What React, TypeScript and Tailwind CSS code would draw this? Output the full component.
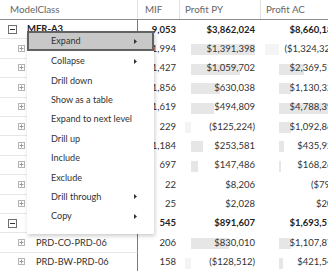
import React from 'react';

type Row = {
  label: string;
  level: 0 | 1;
  mif: string;
  py: number;
  ac: number;
};

const rows: Row[] = [
  { label: 'MFR-A3', level: 0, mif: '9,053', py: 3862024, ac: 8660184 },
  { label: 'PRD-AA-PRD-01', level: 1, mif: '1,994', py: 1391398, ac: -1324325 },
  { label: 'PRD-AB-PRD-02', level: 1, mif: '1,427', py: 1059702, ac: 2369513 },
  { label: 'PRD-AC-PRD-03', level: 1, mif: '1,856', py: 630038, ac: 1130329 },
  { label: 'PRD-AD-PRD-04', level: 1, mif: '1,619', py: 494809, ac: 4788397 },
  { label: 'PRD-AE-PRD-05', level: 1, mif: '229', py: -125224, ac: 1092860 },
  { label: 'PRD-AF-PRD-06', level: 1, mif: '1,184', py: 253581, ac: 435923 },
  { label: 'PRD-AG-PRD-07', level: 1, mif: '697', py: 147486, ac: 168263 },
  { label: 'PRD-AH-PRD-08', level: 1, mif: '22', py: 8206, ac: -796 },
  { label: 'PRD-AI-PRD-09', level: 1, mif: '25', py: 2028, ac: 202 },
  { label: 'MFR-B2', level: 0, mif: '545', py: 891607, ac: 1693514 },
  { label: 'PRD-CO-PRD-06', level: 1, mif: '206', py: 830010, ac: 1107877 },
  { label: 'PRD-BW-PRD-06', level: 1, mif: '158', py: -128512, ac: 421546 },
];

const menu = [
  { label: 'Expand', sub: true },
  { label: 'Collapse', sub: true },
  { label: 'Drill down' },
  { label: 'Show as a table' },
  { label: 'Expand to next level' },
  { label: 'Drill up' },
  { label: 'Include' },
  { label: 'Exclude' },
  { label: 'Drill through', sub: true },
  { label: 'Copy', sub: true },
];

function money(v: number) {
  const s = '$' + Math.abs(v).toLocaleString('en-US');
  return v < 0 ? `(${s})` : s;
}

// data bar, axis = px from the cell's left edge
function Bar({ value, axis, scale }: { value: number; axis: number; scale: number }) {
  const w = Math.abs(value) * scale;
  if (w < 0.5) return null;
  const left = value < 0 ? axis - w : axis;
  return (
    <div
      className={value < 0 ? 'absolute top-[5px] h-[11px] bg-[#f4f4f4]' : 'absolute top-[5px] h-[11px] bg-[#e6e6e6]'}
      style={{ left, width: w }}
    />
  );
}

function Minus() {
  return (
    <svg width="9" height="9" viewBox="0 0 9 9" className="shrink-0">
      <rect x="0.5" y="0.5" width="8" height="8" fill="white" stroke="#6e6e6e" />
      <path d="M2 4.5h5" stroke="#333" />
    </svg>
  );
}

function Plus() {
  return (
    <svg width="7" height="7" viewBox="0 0 7 7" className="shrink-0">
      <rect x="0.5" y="0.5" width="6" height="6" fill="white" stroke="#b4b4b4" />
      <path d="M1.5 3.5h4M3.5 1.5v4" stroke="#9a9a9a" />
    </svg>
  );
}

function Arrow() {
  return (
    <svg width="3" height="5" viewBox="0 0 3 5" className="shrink-0">
      <path d="M0 0L3 2.5L0 5Z" fill="#333" />
    </svg>
  );
}

export default function App() {
  return (
    <div
      className="relative w-[328px] h-[271px] overflow-hidden bg-white text-[#333] text-[9.5px]"
      style={{ fontFamily: 'Lato, "Noto Sans", sans-serif' }}
    >
      {/* header */}
      <div className="flex h-[20px] border-b border-[#8c8c8c] text-[#666] text-[9.8px] leading-[18px]">
        <div className="w-[138px] shrink-0 pl-[10px] border-r border-[#e2e2e2]">ModelClass</div>
        <div className="w-[42px] shrink-0 pl-[7px] border-r border-[#e2e2e2]">MIF</div>
        <div className="w-[81px] shrink-0 pl-[5px] border-r border-[#e2e2e2]">Profit PY</div>
        <div className="w-[79px] shrink-0 pl-[5px]">Profit AC</div>
      </div>

      {/* body */}
      {rows.map((r, i) => {
        const bold = r.level === 0;
        return (
          <div key={i} className={bold ? 'flex h-[19.4px] font-bold text-[#222]' : 'flex h-[19.4px]'}>
            <div className="w-[138px] shrink-0 flex items-center border-r border-[#7a7a7a] border-b border-b-[#e6e6e6] whitespace-nowrap">
              {bold ? (
                <div className="flex items-center pl-[8px] gap-[10px]">
                  <Minus />
                  <span>{r.label}</span>
                </div>
              ) : (
                <div className="flex items-center pl-[18px] gap-[11px] text-[9.2px]">
                  <Plus />
                  <span>{r.label}</span>
                </div>
              )}
            </div>
            <div className="w-[42px] shrink-0 flex items-center justify-end pr-[4px]">{r.mif}</div>
            <div className="relative w-[81px] shrink-0 flex items-center justify-end pr-[6px]">
              {!bold && <Bar value={r.py} axis={11} scale={64 / 1391398} />}
              <span className="relative">{money(r.py)}</span>
            </div>
            <div className="relative w-[79px] shrink-0 flex items-center justify-end pr-[2px] whitespace-nowrap">
              {!bold && <Bar value={r.ac} axis={18} scale={25 / 2369513} />}
              <span className="relative">{money(r.ac)}</span>
            </div>
          </div>
        );
      })}

      {/* context menu */}
      <div className="absolute left-[27px] top-[31px] w-[127px] pb-[8px] bg-white shadow-[1px_2px_4px_rgba(0,0,0,0.2)] text-[#333] text-[9.1px] whitespace-nowrap">
        {menu.map((m, i) => (
          <div
            key={i}
            className={
              i === 0
                ? 'flex items-center h-[20.4px] pl-[22px] pr-[15px] bg-[#c8c8c8] border-2 border-[#626262]'
                : 'flex items-center h-[19.4px] pl-[24px] pr-[17px]'
            }
          >
            <span className="flex-1">{m.label}</span>
            {m.sub && <Arrow />}
          </div>
        ))}
      </div>
    </div>
  );
}
